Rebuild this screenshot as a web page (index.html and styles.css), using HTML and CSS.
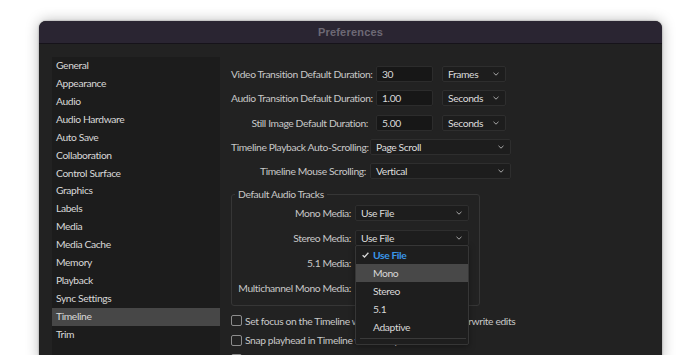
FILE: index.html
```html
<!DOCTYPE html>
<html>
<head>
<meta charset="utf-8">
<title>Preferences</title>
<link rel="stylesheet" href="styles.css">
</head>
<body>
<div class="window">
  <div class="titlebar">Preferences</div>
  <div class="main">
    <ul class="sidebar">
      <li>General</li>
      <li>Appearance</li>
      <li>Audio</li>
      <li>Audio Hardware</li>
      <li>Auto Save</li>
      <li>Collaboration</li>
      <li>Control Surface</li>
      <li>Graphics</li>
      <li>Labels</li>
      <li>Media</li>
      <li>Media Cache</li>
      <li>Memory</li>
      <li>Playback</li>
      <li>Sync Settings</li>
      <li class="active">Timeline</li>
      <li>Trim</li>
    </ul>
    <div class="panel">
      <div class="row">
        <span class="label">Video Transition Default Duration:</span>
        <span class="input">30</span>
        <span class="select unit">Frames<svg class="chev" viewBox="0 0 6 4"><path d="M0.5 0.8 L3 3.2 L5.5 0.8"/></svg></span>
      </div>
      <div class="row">
        <span class="label">Audio Transition Default Duration:</span>
        <span class="input">1.00</span>
        <span class="select unit">Seconds<svg class="chev" viewBox="0 0 6 4"><path d="M0.5 0.8 L3 3.2 L5.5 0.8"/></svg></span>
      </div>
      <div class="row">
        <span class="label">Still Image Default Duration:</span>
        <span class="input">5.00</span>
        <span class="select unit">Seconds<svg class="chev" viewBox="0 0 6 4"><path d="M0.5 0.8 L3 3.2 L5.5 0.8"/></svg></span>
      </div>
      <div class="row wide">
        <span class="label">Timeline Playback Auto-Scrolling:</span>
        <span class="select long">Page Scroll<svg class="chev" viewBox="0 0 6 4"><path d="M0.5 0.8 L3 3.2 L5.5 0.8"/></svg></span>
      </div>
      <div class="row wide">
        <span class="label">Timeline Mouse Scrolling:</span>
        <span class="select long">Vertical<svg class="chev" viewBox="0 0 6 4"><path d="M0.5 0.8 L3 3.2 L5.5 0.8"/></svg></span>
      </div>

      <div class="group">
        <div class="legend">Default Audio Tracks</div>
        <div class="grow">
          <span class="glabel">Mono Media:</span>
          <span class="select track">Use File<svg class="chev" viewBox="0 0 6 4"><path d="M0.5 0.8 L3 3.2 L5.5 0.8"/></svg></span>
        </div>
        <div class="grow">
          <span class="glabel">Stereo Media:</span>
          <span class="select track open">Use File<svg class="chev" viewBox="0 0 6 4"><path d="M0.5 0.8 L3 3.2 L5.5 0.8"/></svg>
            <span class="menu">
              <span class="mitem checked"><svg class="tick" viewBox="0 0 7 6"><path d="M0.6 3.2 L2.5 5 L6.4 0.8"/></svg>Use File</span>
              <span class="mitem hover">Mono</span>
              <span class="mitem">Stereo</span>
              <span class="mitem">5.1</span>
              <span class="mitem">Adaptive</span>
              <span class="msep"></span>
            </span>
          </span>
        </div>
        <div class="grow">
          <span class="glabel">5.1 Media:</span>
          <span class="select track">Use File<svg class="chev" viewBox="0 0 6 4"><path d="M0.5 0.8 L3 3.2 L5.5 0.8"/></svg></span>
        </div>
        <div class="grow">
          <span class="glabel">Multichannel Mono Media:</span>
          <span class="select track">Use File<svg class="chev" viewBox="0 0 6 4"><path d="M0.5 0.8 L3 3.2 L5.5 0.8"/></svg></span>
        </div>
      </div>

      <div class="check"><span class="box"></span>Set focus on the Timeline when performing insert/overwrite edits</div>
      <div class="check"><span class="box"></span>Snap playhead in Timeline when snap is enabled</div>
      <div class="check"><span class="box"></span>Show Clip Mismatch Warning dialog</div>
    </div>
  </div>
</div>
</body>
</html>
```

FILE: styles.css
```css
html, body {
  margin: 0;
  padding: 0;
  background: #ffffff;
  overflow: hidden;
}

body {
  font-family: Lato, "Liberation Sans", sans-serif;
  font-size: 10.3px;
  letter-spacing: -0.38px;
  color: #d2d2d2;
}

.window {
  margin: 21px 0 0 39px;
  width: 623px;
  height: 340px;
  background: #222222;
  border-radius: 7px 7px 0 0;
  box-shadow: 0 0 14px rgba(0, 0, 0, 0.28), 0 0 2px rgba(0, 0, 0, 0.4);
  overflow: hidden;
}

.titlebar {
  height: 22px;
  line-height: 22px;
  background: #2a2532;
  border-bottom: 1px solid #16131a;
  text-align: center;
  font-family: "Liberation Sans", sans-serif;
  font-weight: bold;
  font-size: 11px;
  color: #6d6975;
  letter-spacing: 0.2px;
}

.main {
  display: flex;
  padding: 13px 0 0 13px;
  height: 330px;
}

.sidebar {
  list-style: none;
  margin: 0;
  padding: 0;
  width: 168px;
  flex: none;
  background: #1c1c1c;
}

.sidebar li {
  height: 17.93px;
  line-height: 17.93px;
  padding-left: 4px;
  color: #d8d8d8;
  white-space: nowrap;
}

.sidebar li.active {
  background: #474747;
}

.panel {
  flex: 1;
  padding: 9px 0 0 11px;
}

.row {
  display: flex;
  align-items: center;
  height: 16px;
  margin-bottom: 8.25px;
}

.label {
  width: 137px;
  text-align: right;
  white-space: nowrap;
  color: #c8c8c8;
  flex: none;
}

.row.wide .label {
  width: 135px;
}

.input {
  box-sizing: border-box;
  margin-left: 8px;
  width: 57px;
  height: 16px;
  line-height: 14px;
  padding-left: 5px;
  background: #171717;
  border: 1px solid #2c2c2c;
  border-radius: 2px;
  color: #dadada;
}

.select {
  box-sizing: border-box;
  display: flex;
  align-items: center;
  justify-content: space-between;
  height: 16px;
  padding: 0 6px 0 5px;
  background: #1d1d1d;
  border: 1px solid #2e2e2e;
  border-radius: 2px;
  color: #dcdcdc;
  white-space: nowrap;
  flex: none;
}

.select.unit {
  margin-left: 9px;
  width: 64px;
}

.select.long {
  margin-left: 4px;
  width: 141px;
}

.select.track {
  margin-left: 4px;
  width: 114px;
}

.chev {
  width: 6px;
  height: 4px;
  fill: none;
  stroke: #a9a9a9;
  stroke-width: 1;
}

.group {
  box-sizing: border-box;
  margin-top: 15px;
  width: 249px;
  height: 112px;
  border: 1px solid #363636;
  border-radius: 3px;
}

.legend {
  width: max-content;
  height: 12px;
  line-height: 12px;
  margin: -7px 0 0 3px;
  padding: 0 3px;
  background: #222222;
  color: #c8c8c8;
}

.grow {
  display: flex;
  align-items: center;
  height: 16px;
  margin-top: 9px;
}

.legend + .grow {
  margin-top: 5px;
}

.glabel {
  width: 119px;
  text-align: right;
  white-space: nowrap;
  color: #c8c8c8;
  flex: none;
}

.select.open {
  position: relative;
}

.menu {
  position: absolute;
  z-index: 5;
  top: 14px;
  left: -1px;
  box-sizing: border-box;
  width: 114px;
  height: 100px;
  background: #1e1e1e;
  border: 1px solid #363636;
  border-radius: 2px;
  display: flex;
  flex-direction: column;
  box-shadow: 0 2px 6px rgba(0, 0, 0, 0.35);
}

.mitem {
  position: relative;
  height: 18px;
  line-height: 18px;
  padding-left: 17px;
  color: #d8d8d8;
}

.mitem.checked {
  color: #3a97ea;
  font-weight: bold;
}

.mitem.hover {
  background: #484848;
}

.tick {
  position: absolute;
  left: 6px;
  top: 6px;
  width: 7px;
  height: 6px;
  fill: none;
  stroke: #d8d8d8;
  stroke-width: 1.3;
}

.msep {
  margin: 2px 2px 0 4px;
  height: 1px;
  background: #3a3a3a;
}

.check {
  display: flex;
  align-items: center;
  height: 19.5px;
  white-space: nowrap;
  color: #c8c8c8;
}

.group + .check {
  margin-top: 5px;
}

.box {
  box-sizing: border-box;
  width: 11px;
  height: 11px;
  margin-right: 3px;
  border: 1px solid #8c8c8c;
  border-radius: 2px;
  flex: none;
}
```
